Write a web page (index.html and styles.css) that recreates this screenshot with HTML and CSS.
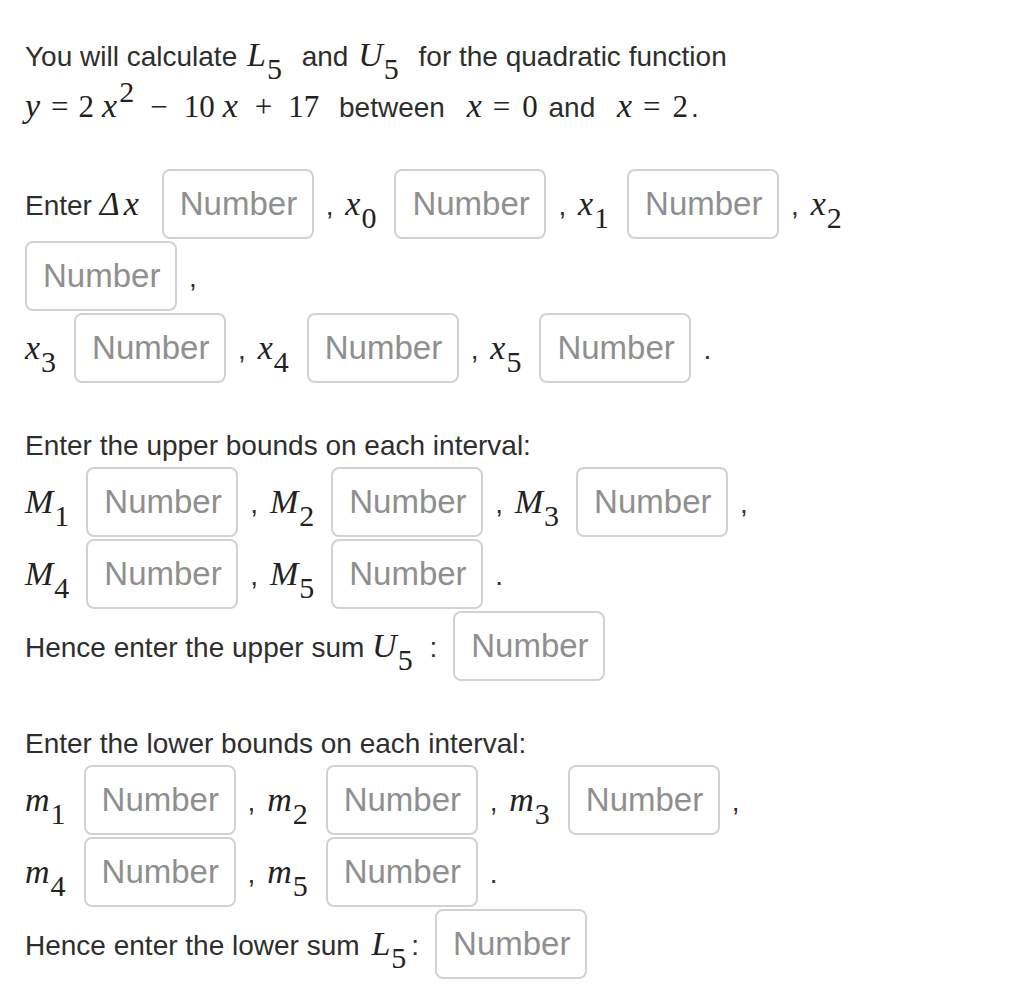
FILE: index.html
```html
<!DOCTYPE html>
<html>
<head>
<meta charset="utf-8">
<link rel="stylesheet" href="styles.css">
</head>
<body>
<main class="page">
  <p class="intro">You will calculate <span class="m gap"><i class="L">L</i><sub>5</sub></span> and <span class="m gap"><i class="U">U</i><sub>5</sub></span> for the quadratic function<br><span class="m"><i>y</i><span class="eq">=</span><span class="n">2</span><i>x</i><sup>2</sup><span class="bin">−</span><span class="n">10</span><i>x</i><span class="bin">+</span><span class="n last">17</span></span> between <span class="m lead"><i>x</i><span class="rel">=</span><span class="n0">0</span></span> and <span class="m lead"><i>x</i><span class="rel">=</span><span class="n0">2</span></span>.</p>

  <section class="block first">
    <div class="row">
      <span class="seg">Enter <span class="m dx"><i class="D">Δ</i><i>x</i></span></span>
      <input class="num" type="text" placeholder="Number">
      <span class="seg">, <span class="m after"><i class="x">x</i><sub>0</sub></span></span>
      <input class="num" type="text" placeholder="Number">
      <span class="seg">, <span class="m after"><i class="x">x</i><sub>1</sub></span></span>
      <input class="num" type="text" placeholder="Number">
      <span class="seg">, <span class="m after"><i class="x">x</i><sub>2</sub></span></span>
    </div>
    <div class="row">
      <input class="num lead" type="text" placeholder="Number">
      <span class="seg">,</span>
    </div>
    <div class="row">
      <span class="seg"><span class="m"><i class="x">x</i><sub>3</sub></span></span>
      <input class="num" type="text" placeholder="Number">
      <span class="seg">, <span class="m after"><i class="x">x</i><sub>4</sub></span></span>
      <input class="num" type="text" placeholder="Number">
      <span class="seg">, <span class="m after"><i class="x">x</i><sub>5</sub></span></span>
      <input class="num" type="text" placeholder="Number">
      <span class="seg">.</span>
    </div>
  </section>

  <section class="block">
    <div class="label">Enter the upper bounds on each interval:</div>
    <div class="row">
      <span class="seg"><span class="m"><i class="M">M</i><sub>1</sub></span></span>
      <input class="num" type="text" placeholder="Number">
      <span class="seg">, <span class="m after"><i class="M">M</i><sub>2</sub></span></span>
      <input class="num" type="text" placeholder="Number">
      <span class="seg">, <span class="m after"><i class="M">M</i><sub>3</sub></span></span>
      <input class="num" type="text" placeholder="Number">
      <span class="seg">,</span>
    </div>
    <div class="row">
      <span class="seg"><span class="m"><i class="M">M</i><sub>4</sub></span></span>
      <input class="num" type="text" placeholder="Number">
      <span class="seg">, <span class="m after"><i class="M">M</i><sub>5</sub></span></span>
      <input class="num" type="text" placeholder="Number">
      <span class="seg">.</span>
    </div>
    <div class="row">
      <span class="seg">Hence enter the upper sum <span class="m"><i class="U">U</i><sub>5</sub></span> <span class="colon">:</span></span>
      <input class="num" type="text" placeholder="Number">
    </div>
  </section>

  <section class="block">
    <div class="label">Enter the lower bounds on each interval:</div>
    <div class="row">
      <span class="seg"><span class="m"><i class="mm">m</i><sub>1</sub></span></span>
      <input class="num" type="text" placeholder="Number">
      <span class="seg">, <span class="m after"><i class="mm">m</i><sub>2</sub></span></span>
      <input class="num" type="text" placeholder="Number">
      <span class="seg">, <span class="m after"><i class="mm">m</i><sub>3</sub></span></span>
      <input class="num" type="text" placeholder="Number">
      <span class="seg">,</span>
    </div>
    <div class="row">
      <span class="seg"><span class="m"><i class="mm">m</i><sub>4</sub></span></span>
      <input class="num" type="text" placeholder="Number">
      <span class="seg">, <span class="m after"><i class="mm">m</i><sub>5</sub></span></span>
      <input class="num" type="text" placeholder="Number">
      <span class="seg">.</span>
    </div>
    <div class="row">
      <span class="seg">Hence enter the lower sum <span class="m sumL"><i class="L">L</i><sub>5</sub></span>:</span>
      <input class="num wide" type="text" placeholder="Number">
    </div>
  </section>
</main>
</body>
</html>
```

FILE: styles.css
```css
html, body {
  margin: 0;
  padding: 0;
  background: #ffffff;
}

body {
  font-family: "Liberation Sans", Arial, sans-serif;
  font-size: 28px;
  color: #2e2e2e;
}

.page {
  padding: 31px 25px 0 25px;
}

.intro {
  margin: 0;
  line-height: 51px;
}

.m {
  font-family: "Liberation Serif", "Times New Roman", serif;
  font-size: 31px;
  line-height: 0;
  color: #222222;
}

.m i {
  font-style: italic;
  font-size: 34px;
  padding-right: 1px;
}

.m i.D {
  padding-right: 4px;
}

.m sub,
.m sup {
  font-style: normal;
  font-size: 30px;
  line-height: 0;
  position: relative;
  vertical-align: baseline;
}

.m sub {
  top: 13px;
}

.m sup {
  top: -15px;
  margin-left: 1px;
}

.m i.x + sub {
  margin-right: 2px;
}

.m i.M + sub {
  margin-right: 1px;
}

.m i.mm + sub {
  margin-right: 2px;
}

.m i.L + sub {
  margin-right: 5px;
}

.m i.U + sub {
  margin-right: 5px;
}

.m.dx {
  margin-right: 6px;
}

.m.gap {
  margin-left: 2px;
  margin-right: 7px;
}

.m.lead {
  margin-left: 14px;
}

.m.after {
  margin-left: 4px;
}

.m.sumL {
  margin-left: 4px;
}

.eq {
  margin: 0 10px 0 10px;
}

.n {
  margin-right: 8px;
}

.n.last {
  margin-right: 12px;
}

.n0 {
  margin-right: 3px;
}

.bin {
  margin: 0 16px;
}

.rel {
  margin: 0 12px 0 10px;
}

.colon {
  margin-left: 4px;
}

.block {
  margin-top: 42px;
}

.block.first {
  margin-top: 35px;
}

.label {
  line-height: 40px;
}

.row {
  display: flex;
  align-items: baseline;
  white-space: nowrap;
}

.seg {
  line-height: 40px;
}

.num {
  box-sizing: border-box;
  width: 152px;
  height: 70px;
  margin: 1px 12px 1px 16px;
  padding: 0 0 0 16px;
  border: 2px solid #d2d2d2;
  border-radius: 8px;
  background: #ffffff;
  font-family: "Liberation Sans", Arial, sans-serif;
  font-size: 33px;
  color: #333333;
  outline: none;
}

.num.lead {
  margin-left: 0;
}

.num.wide {
  margin-left: 16px;
}

.num::placeholder {
  color: #8f8f8f;
  opacity: 1;
}
```
